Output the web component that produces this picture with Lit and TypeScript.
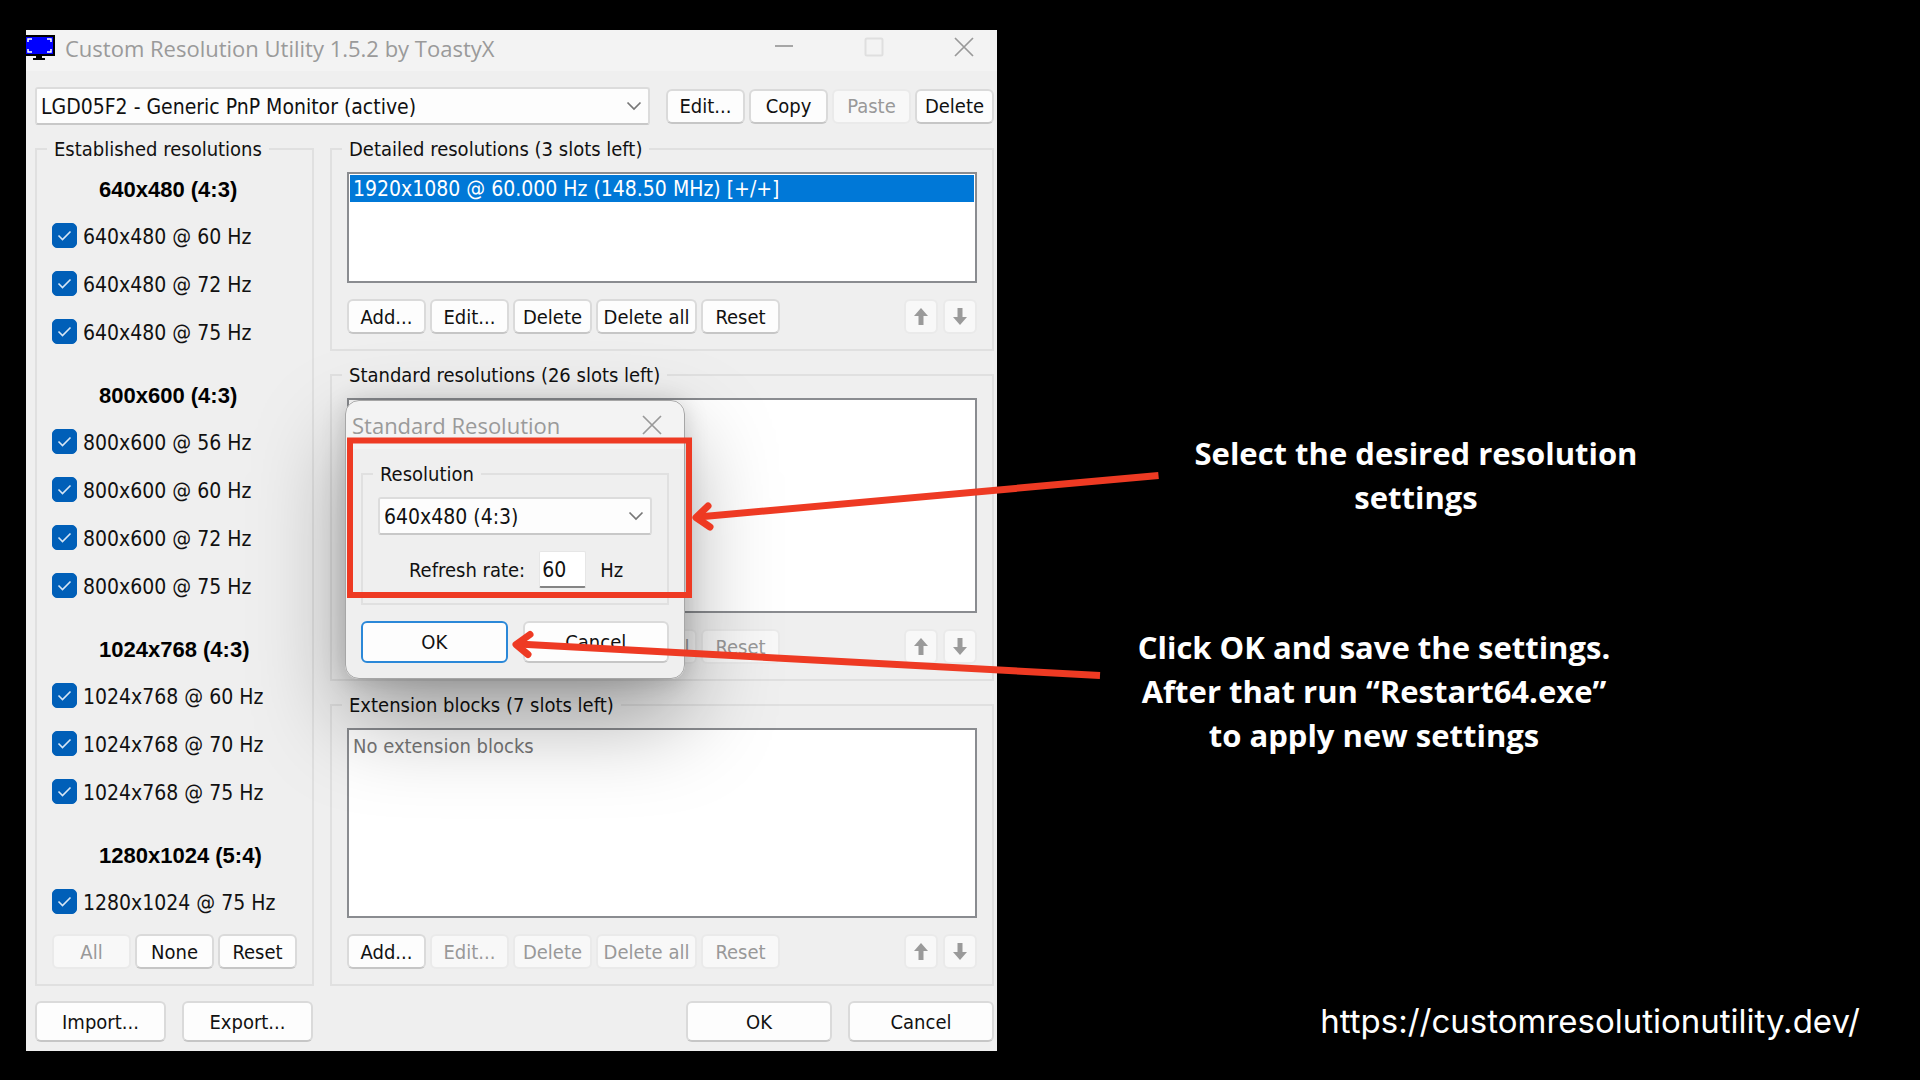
import { LitElement, html, css, svg, nothing } from "lit";
import { customElement, property } from "lit/decorators.js";

const controls = css`
  * { box-sizing: border-box; }
  button, input, select, fieldset, legend { font: inherit; color: inherit; margin: 0; }
  .btn {
    height: 35px;
    min-width: 79px;
    padding: 0;
    border: 2px solid #dadada;
    border-bottom-color: #c6c6c6;
    border-radius: 6px;
    background: #fdfdfd;
    color: #111;
    line-height: 24px;
    white-space: nowrap;
  }
  .btn:disabled { color: #999; background: #f8f8f8; border-color: #eaeaea; }
  .group {
    display: flex;
    flex-direction: column;
    min-width: 0;
    padding: 10px 15px 15px;
    border: 2px solid #e0e0e0;
  }
  .group legend { height: 26px; line-height: 26px; margin-left: -5px; padding: 0 7px; }
  .combo { display: grid; align-items: center; flex: 1; font-size: 21px; }
  .combo select {
    grid-area: 1 / 1;
    width: 100%;
    height: 38px;
    padding: 2px 40px 0 4px;
    appearance: none;
    border: 2px solid #dcdcdc;
    border-bottom-color: #c8c8c8;
    border-radius: 3px;
    background: #fdfdfd;
    color: #111;
  }
  .combo svg { grid-area: 1 / 1; justify-self: end; margin-right: 8px; pointer-events: none; }
`;

const chevron = html`<svg width="16" height="10" viewBox="0 0 16 10" fill="none" stroke="#777" stroke-width="1.700"><path d="M1.500 1.500 8 8l6.500-6.500"/></svg>`;
const cross = html`<svg width="20" height="20" viewBox="0 0 20 20" fill="none" stroke="#999" stroke-width="1.700"><path d="M1 1l18 18M19 1 1 19"/></svg>`;

@customElement("resolution-group")
export class ResolutionGroup extends LitElement {
  @property() heading = "";
  @property() size = "small";
  @property({ type: Array }) items: string[] = [];
  @property() empty = "";
  @property({ type: Array }) enabled: string[] = [];

  static styles = [controls, css`
    :host { display: block; }
    .list {
      margin: 0 0 16px;
      padding: 1px;
      list-style: none;
      border: 2px solid #8a8c90;
      background: #fff;
      font-size: 21px;
      line-height: 26px;
    }
    .small { min-height: 111px; }
    .large { min-height: 215px; }
    .medium { min-height: 190px; }
    .item { padding: 1px 3px 0; }
    .selected { background: #0078d7; color: #fff; }
    .empty { color: #777; font-size: 20px; line-height: 28px; }
    .row { display: flex; gap: 4px; }
    .wide { min-width: 101px; }
    .arrow { min-width: 34px; display: grid; place-items: center; }
    .first { margin-left: auto; margin-right: 1px; }
  `];

  private button(label: string) {
    return html`<button class="btn ${label === "Delete all" ? "wide" : ""}" ?disabled=${!this.enabled.includes(label)}>${label}</button>`;
  }

  render() {
    return html`
      <fieldset class="group">
        <legend>${this.heading}</legend>
        <ul class="list ${this.size}" role="listbox" aria-label=${this.heading}>
          ${this.items.map((t) => html`<li class="item selected" role="option" aria-selected="true">${t}</li>`)}
          ${this.empty ? html`<li class="item empty">${this.empty}</li>` : nothing}
        </ul>
        <div class="row">
          ${["Add...", "Edit...", "Delete", "Delete all", "Reset"].map((l) => this.button(l))}
          <button class="btn arrow first" disabled aria-label="Move up">
            <svg width="14" height="17" viewBox="0 0 14 17" fill="#9a9a9a"><path d="M7 0l7 8H9.500v9h-5V8H0z"/></svg>
          </button>
          <button class="btn arrow" disabled aria-label="Move down">
            <svg width="14" height="17" viewBox="0 0 14 17" fill="#9a9a9a"><path d="M7 17l7-8H9.500V0h-5v9H0z"/></svg>
          </button>
        </div>
      </fieldset>`;
  }
}

@customElement("established-resolutions")
export class EstablishedResolutions extends LitElement {
  static styles = [controls, css`
    :host { display: flex; }
    .group { flex: 1; padding-top: 7px; }
    .set { display: flex; flex-direction: column; margin-bottom: 20px; }
    .set:last-of-type { margin-bottom: 0; }
    .title {
      margin: 0;
      padding-left: 47px;
      font: 700 22px/42px "Liberation Sans", Arial, sans-serif;
      color: #000;
    }
    .mode { display: flex; align-items: center; gap: 6px; height: 48px; font-size: 21px; white-space: nowrap; }
    .text { padding-top: 3px; }
    .tick { display: grid; place-items: center; flex: none; }
    .tick > * { grid-area: 1 / 1; }
    .tick svg { pointer-events: none; }
    .box { appearance: none; width: 25px; height: 25px; border-radius: 5px; background: #fff; border: 1px solid #888; }
    .box:checked { background: #005fb8; border-color: #005fb8; }
    .row { display: grid; grid-template-columns: repeat(3, 1fr); gap: 4px; margin-top: auto; }
  `];

  private sets: [string, string, number[]][] = [
    ["640x480", "4:3", [60, 72, 75]],
    ["800x600", "4:3", [56, 60, 72, 75]],
    ["1024x768", "4:3", [60, 70, 75]],
    ["1280x1024", "5:4", [75]],
  ];

  render() {
    return html`
      <fieldset class="group">
        <legend>Established resolutions</legend>
        ${this.sets.map(([size, ratio, rates]) => html`
          <section class="set">
            <h2 class="title">${size} (${ratio})</h2>
            ${rates.map((rate) => html`
              <label class="mode">
                <span class="tick">
                  <input class="box" type="checkbox" checked />
                  <svg width="15" height="11" viewBox="0 0 15 11" fill="none" stroke="#d6e6f5" stroke-width="1.600"><path d="M1.500 5.500 5.500 9.500 13.500 1.500"/></svg>
                </span>
                <span class="text">${size} @ ${rate} Hz</span>
              </label>`)}
          </section>`)}
        <div class="row">
          <button class="btn" disabled>All</button>
          <button class="btn">None</button>
          <button class="btn">Reset</button>
        </div>
      </fieldset>`;
  }
}

@customElement("standard-dialog")
export class StandardDialog extends LitElement {
  static styles = [controls, css`
    :host {
      display: block;
      padding: 0 15px 15px;
      border: 1px solid #a6a6a6;
      border-radius: 14px;
      background: linear-gradient(#f3f3f3 48px, #efefef 48px);
      box-shadow: 0 40px 90px rgba(0, 0, 0, 0.34), 0 2px 24px rgba(0, 0, 0, 0.16);
    }
    .bar { display: flex; align-items: center; justify-content: space-between; height: 48px; margin: 0 7px 12px -9px; }
    .name { margin: 0; font: 400 22px/30px "Open Sans", sans-serif; color: #9a9a9a; }
    .close { display: grid; place-items: center; padding: 0; border: 0; background: none; }
    .rate { display: flex; align-items: center; gap: 14px; margin-top: 16px; padding-left: 31px; }
    .value {
      width: 47px;
      height: 37px;
      padding: 2px 2px 0;
      border: 1px solid #e6e6e6;
      border-bottom: 2px solid #858585;
      border-radius: 2px;
      background: #fff;
      font-size: 21px;
    }
    .actions { display: grid; grid-template-columns: 1fr 1fr; gap: 15px; margin-top: 16px; }
    .btn { height: 42px; }
    .default { border-color: #2b88d8; }
  `];

  render() {
    return html`
      <header class="bar">
        <h2 class="name">Standard Resolution</h2>
        <button class="close" aria-label="Close">${cross}</button>
      </header>
      <fieldset class="group">
        <legend>Resolution</legend>
        <div class="combo">
          <select aria-label="Resolution"><option>640x480 (4:3)</option></select>
          ${chevron}
        </div>
        <div class="rate">
          <label for="rate">Refresh rate:</label>
          <input class="value" id="rate" type="text" value="60" />
          <span>Hz</span>
        </div>
      </fieldset>
      <div class="actions">
        <button class="btn default">OK</button>
        <button class="btn">Cancel</button>
      </div>`;
  }
}

@customElement("app-root")
export class AppRoot extends LitElement {
  static styles = [controls, css`
    :host {
      display: block;
      font: 400 20px/26px "DejaVu Sans Condensed", "DejaVu Sans", sans-serif;
      color: #111;
      background: #000;
    }
    .stage {
      position: relative;
      display: grid;
      grid-template-columns: minmax(0, 971fr) minmax(0, 923fr);
      min-height: 100vh;
      padding: 30px 0 29px 26px;
    }
    .window { position: relative; display: flex; flex-direction: column; background: #efefef; }
    .titlebar { display: flex; align-items: center; height: 41px; padding: 0 3px 8px 0; background: #f3f3f3; }
    .logo { flex: none; margin-right: 10px; }
    .name { margin: 0; padding-top: 2px; font: 400 22px/30px "Open Sans", sans-serif; color: #9a9a9a; white-space: nowrap; }
    .caption { display: flex; gap: 30px; margin-left: auto; }
    .cap { display: grid; place-items: center; width: 60px; height: 28px; padding: 0; border: 0; background: none; }
    .toolbar { display: flex; align-items: center; gap: 4px; padding: 16px 3px 11px 9px; }
    .toolbar .combo { margin-right: 12px; }
    .columns { display: grid; grid-template-columns: 279px minmax(0, 1fr); gap: 16px; flex: 1; padding: 0 3px 0 9px; }
    .stack { display: flex; flex-direction: column; gap: 11px; }
    .footer { display: flex; gap: 16px; padding: 15px 3px 9px 9px; }
    .footer .btn { width: 131px; height: 41px; }
    .footer .main { width: 146px; }
    .push { margin-left: auto; }
    .popup { position: absolute; left: 319px; top: 370px; width: 340px; }
    .notes {
      display: flex;
      flex-direction: column;
      padding: 401px 60px 0 137px;
      color: #fff;
      font: 700 31px/44px "Open Sans", sans-serif;
      text-align: center;
    }
    .note { width: 480px; margin: 0 0 106px; }
    .note.upper { width: 460px; margin-left: 52px; }
    .link {
      margin: auto 0 8px;
      align-self: flex-end;
      color: #fff;
      text-decoration: none;
      font: 400 33px/44px Inter, sans-serif;
    }
    .marks { position: absolute; inset: 0; width: 100%; height: 100%; pointer-events: none; }
  `];

  private arrow(shaft: string, head: string) {
    return svg`<path d=${shaft}/><path d=${head} stroke-linecap="round" stroke-linejoin="round"/>`;
  }

  render() {
    const all = ["Add...", "Edit...", "Delete", "Delete all", "Reset"];
    return html`
      <main class="stage">
        <section class="window">
          <header class="titlebar">
            <svg class="logo" width="29" height="26" viewBox="0 0 29 26">
              <path d="M-1 1h30v21H-1z" fill="#000"/>
              <path d="M0 3h27v17H0z" fill="#0000ff"/>
              <path d="M10 22h6v2h3v2H7v-2h3z" fill="#000"/>
              <path d="M2 8V5h4M21 5h4v3M2 15v3h4M21 18h4v-3" fill="none" stroke="#fff" stroke-width="1.500"/>
            </svg>
            <h1 class="name">Custom Resolution Utility 1.5.2 by ToastyX</h1>
            <div class="caption">
              <button class="cap" aria-label="Minimize"><svg width="20" height="20" viewBox="0 0 20 20"><path d="M1 9h18" stroke="#999" stroke-width="1.700"/></svg></button>
              <button class="cap" aria-label="Maximize"><svg width="20" height="20" viewBox="0 0 20 20"><rect x="1.500" y="1.500" width="17" height="17" rx="1.500" fill="none" stroke="#dfdfdf" stroke-width="2"/></svg></button>
              <button class="cap" aria-label="Close">${cross}</button>
            </div>
          </header>
          <div class="toolbar">
            <div class="combo">
              <select aria-label="Display"><option>LGD05F2 - Generic PnP Monitor (active)</option></select>
              ${chevron}
            </div>
            <button class="btn">Edit...</button>
            <button class="btn">Copy</button>
            <button class="btn" disabled>Paste</button>
            <button class="btn">Delete</button>
          </div>
          <div class="columns">
            <established-resolutions></established-resolutions>
            <div class="stack">
              <resolution-group heading="Detailed resolutions (3 slots left)" size="small"
                .items=${["1920x1080 @ 60.000 Hz (148.50 MHz) [+/+]"]} .enabled=${all}></resolution-group>
              <resolution-group heading="Standard resolutions (26 slots left)" size="large"
                .enabled=${["Add..."]}></resolution-group>
              <resolution-group heading="Extension blocks (7 slots left)" size="medium"
                empty="No extension blocks" .enabled=${["Add..."]}></resolution-group>
            </div>
          </div>
          <footer class="footer">
            <button class="btn">Import...</button>
            <button class="btn">Export...</button>
            <button class="btn main push">OK</button>
            <button class="btn main">Cancel</button>
          </footer>
          <standard-dialog class="popup" role="dialog" aria-label="Standard Resolution"></standard-dialog>
        </section>
        <aside class="notes">
          <p class="note upper">Select the desired resolution settings</p>
          <p class="note">Click OK and save the settings.<br />After that run “Restart64.exe”<br />to apply new settings</p>
          <a class="link" href="https://customresolutionutility.dev/">https://customresolutionutility.dev/</a>
        </aside>
        <svg class="marks" viewBox="0 0 1920 1080" fill="none" stroke="#ee3a23" stroke-width="7">
          <rect x="350" y="440.500" width="339" height="154.500" stroke-width="6"/>
          ${this.arrow("M1158.500 475.500 698 517", "M708 506 696 517.500l14 9.500")}
          ${this.arrow("M1100 675.500 518 644", "M530 634.500 516 644.500l12 10")}
        </svg>
      </main>`;
  }
}
